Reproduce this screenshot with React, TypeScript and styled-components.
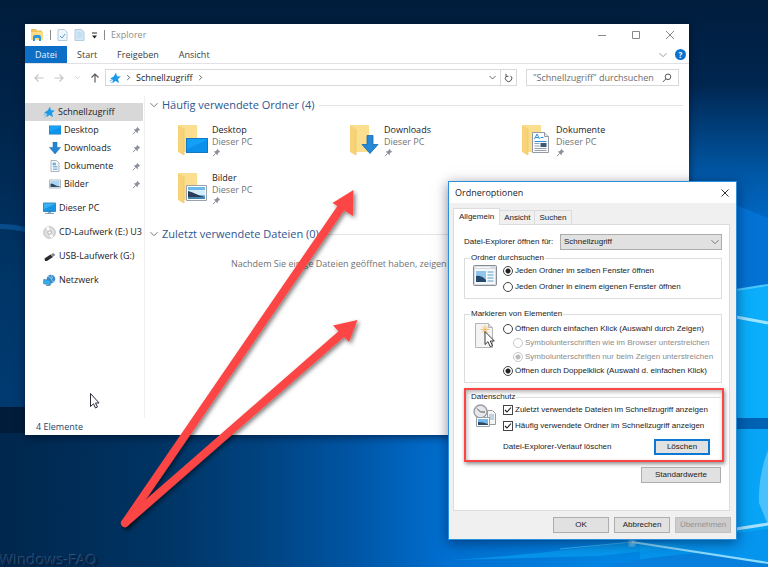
import React from "react";
import styled, { createGlobalStyle, css } from "styled-components";

const ui = '"Open Sans", "Noto Sans", sans-serif';
const dialogFont = '"Liberation Sans", Arial, sans-serif';

const GlobalStyle = createGlobalStyle`
  * { box-sizing: border-box; }
  html, body { margin: 0; height: 100%; }
  body { overflow: hidden; font-family: ${ui}; font-size: 9px; line-height: 12px; color: #1b1b1f; }
  button, input, select { font: inherit; color: inherit; margin: 0; }
  button { cursor: default; }
  svg { display: block; flex: none; }
`;

/* ---------- desktop ---------- */

const Desktop = styled.main`
  position: relative;
  min-height: 100vh;
  overflow: hidden;
  background: #002a55;
`;
const Backdrop = styled.svg`
  position: absolute;
  inset: 0;
  width: 100%;
  height: 100%;
`;
const Overlay = styled.svg`
  position: absolute;
  left: 0;
  top: 0;
  overflow: visible;
  pointer-events: none;
`;
const Watermark = styled.div`
  position: absolute;
  left: 0;
  bottom: 0;
  font-size: 15px;
  line-height: 16px;
  color: #0a2a50;
  text-shadow: -1px -1px 0 #2b527c, 1px 1px 1px #001a38;
`;

/* ---------- explorer window ---------- */

const ExplorerWindow = styled.section`
  position: absolute;
  left: 25px;
  right: 79px;
  top: 24px;
  background: #fff;
  box-shadow: 0 2px 8px rgba(0, 10, 30, 0.6);
`;
const TitleBar = styled.header`
  display: flex;
  align-items: center;
  gap: 6px;
  height: 22px;
  padding: 0 14px 0 5px;
`;
const TitleText = styled.span`
  flex: 1;
  color: #8d8d8d;
`;
const Rule = styled.span`
  width: 1px;
  height: 10px;
  background: #8a8a8a;
`;
const IconButton = styled.button`
  display: flex;
  align-items: center;
  justify-content: center;
  padding: 0;
  border: 0;
  background: none;
`;
const WindowControls = styled.div`
  display: flex;
  gap: 24px;
`;
const Ribbon = styled.nav`
  display: flex;
  align-items: center;
  height: 18px;
  padding-right: 3px;
  border-bottom: 1px solid #e2e2e6;
`;
const RibbonTab = styled.button<{ $primary?: boolean }>`
  height: 17px;
  padding: 0 10px;
  border: 0;
  background: ${(p) => (p.$primary ? "#0b6fc8" : "none")};
  color: ${(p) => (p.$primary ? "#e4f2ff" : "#3d3d42")};
`;
const Spacer = styled.span`
  flex: 1;
`;
const HelpButton = styled.button`
  width: 11px;
  height: 11px;
  margin-left: 8px;
  padding: 0;
  border: 0;
  border-radius: 50%;
  background: #0b72cf;
  color: #fff;
  font-weight: 700;
  font-size: 8px;
  line-height: 11px;
`;
const AddressRow = styled.div`
  display: flex;
  align-items: center;
  height: 27px;
  padding: 0 10px 0 9px;
`;
const NavButtons = styled.div`
  display: flex;
  align-items: center;
  justify-content: space-between;
  width: 66px;
  margin-right: 5px;
`;
const AddressBox = styled.div`
  flex: 1;
  display: flex;
  align-items: center;
  gap: 4px;
  height: 17px;
  padding-left: 3px;
  border: 1px solid #d9d9d9;
`;
const RefreshButton = styled(IconButton)`
  width: 16px;
  height: 15px;
  border-left: 1px solid #d9d9d9;
`;
const SearchBox = styled.label`
  display: flex;
  align-items: center;
  width: 153px;
  height: 17px;
  margin-left: 9px;
  padding: 0 6px;
  border: 1px solid #d9d9d9;
`;
const SearchInput = styled.input`
  flex: 1;
  min-width: 0;
  padding: 0;
  border: 0;
  outline: 0;
  background: none;
  &::placeholder {
    color: #6d6d6d;
    opacity: 1;
  }
`;
const Body = styled.div`
  display: flex;
  min-height: 327px;
  padding-top: 5px;
`;
const Sidebar = styled.aside`
  display: flex;
  flex-direction: column;
  width: 120px;
  padding: 7px 1px 0 0;
  border-right: 1px solid #efefef;
`;
const SideItem = styled.a<{ $level: 0 | 1 | 2; $active?: boolean }>`
  display: flex;
  align-items: center;
  gap: 3px;
  height: 18px;
  padding-right: ${(p) => (p.$level === 1 ? 2 : 0)}px;
  padding-left: ${(p) => (p.$level === 1 ? 24 : 18)}px;
  margin-top: ${(p) => (p.$level === 2 ? 6 : 0)}px;
  background: ${(p) => (p.$active ? "#d8d8d8" : "none")};
  color: inherit;
  text-decoration: none;
  white-space: nowrap;
`;
const SideLabel = styled.span`
  flex: 1;
  min-width: 0;
  overflow: hidden;
`;
const Content = styled.div`
  flex: 1;
  min-width: 0;
  padding: 1px 6px 0 5px;
`;
const GroupHeading = styled.h2`
  display: flex;
  align-items: center;
  gap: 4px;
  height: 16px;
  margin: 0;
  font-size: 11px;
  line-height: 16px;
  font-weight: 400;
  color: #2f568f;
  white-space: nowrap;
  &::after {
    content: "";
    flex: 1;
    height: 1px;
    background: #e3e5ea;
  }
`;
const FolderGrid = styled.div`
  display: grid;
  grid-template-columns: repeat(3, 172px);
  gap: 12px 0;
  padding: 11px 0 18px 28px;
`;
const Folder = styled.a`
  display: flex;
  gap: 4px;
  height: 36px;
  color: inherit;
  text-decoration: none;
`;
const FolderText = styled.div`
  display: flex;
  flex-direction: column;
`;
const FolderPlace = styled.span`
  color: #747474;
`;
const EmptyNote = styled.p`
  margin: 16px 0 0 81px;
  color: #727272;
  white-space: nowrap;
`;
const StatusBar = styled.footer`
  display: flex;
  align-items: center;
  height: 17px;
  padding-left: 11px;
  color: #2a3f66;
`;

/* ---------- options dialog ---------- */

const Dialog = styled.section`
  position: absolute;
  left: 448px;
  top: 181px;
  width: 289px;
  padding-bottom: 6px;
  border: 1px solid #2a8fdc;
  background: #f0f0f0;
  box-shadow: 0 3px 12px rgba(0, 10, 40, 0.5);
  font-family: ${dialogFont};
  font-size: 8px;
`;
const DialogTitle = styled.header`
  display: flex;
  align-items: center;
  justify-content: space-between;
  height: 21px;
  padding: 0 7px 0 6px;
  background: #fff;
  font-family: ${ui};
  font-size: 9px;
`;
const TabList = styled.div`
  display: flex;
  align-items: flex-end;
  height: 21px;
  padding-left: 4px;
`;
const Tab = styled.button<{ $selected?: boolean }>`
  position: relative;
  height: ${(p) => (p.$selected ? 17 : 14)}px;
  padding: 0 ${(p) => (p.$selected ? 5 : 4)}px;
  border: 1px solid #dcdcdc;
  border-left-width: ${(p) => (p.$selected ? 1 : 0)}px;
  border-bottom: 0;
  background: ${(p) => (p.$selected ? "#fff" : "#f0f0f0")};
  ${(p) => p.$selected && css`margin-bottom: -1px; z-index: 1;`}
`;
const TabPanel = styled.div`
  display: flex;
  flex-direction: column;
  min-height: 287px;
  margin: 0 6px 0 4px;
  padding: 9px 5px 0 10px;
  border: 1px solid #dcdcdc;
  background: #fff;
`;
const OpenForRow = styled.div`
  display: flex;
  align-items: center;
  justify-content: space-between;
  padding-right: 2px;
  white-space: nowrap;
`;
const SelectWrap = styled.div`
  display: grid;
  align-items: center;
  width: 162px;
  & > * { grid-area: 1 / 1; }
  & > svg { justify-self: end; margin-right: 3px; pointer-events: none; }
`;
const Select = styled.select`
  appearance: none;
  height: 16px;
  padding: 0 3px;
  border: 1px solid #adadad;
  border-radius: 0;
  background: #e1e1e1;
`;
const Group = styled.fieldset<{ $gap: number; $top?: number; $framed?: boolean }>`
  display: flex;
  gap: 6px;
  min-width: 0;
  margin: ${(p) => p.$gap}px 2px 0 0;
  padding: ${(p) => p.$top ?? 1}px 4px 5px 8px;
  border: 1px solid #dcdcdc;
  ${(p) => p.$framed && css`
    border-color: #dcdcdc transparent transparent transparent;
    margin: 0;
    padding: 1px 4px 4px 6px;
  `}
`;
const Legend = styled.legend`
  margin-left: -3px;
  padding: 0 1px;
  line-height: 12px;
`;
const Highlight = styled.div`
  margin: 5px 0 0 0;
  padding: 1px 0 0;
  border: 2px solid #fb4646;
  box-shadow: 1px 2px 4px rgba(0, 0, 0, 0.45), inset 1px 2px 4px rgba(0, 0, 0, 0.3);
`;
const Options = styled.div<{ $gap: number }>`
  flex: 1;
  display: flex;
  flex-direction: column;
  gap: ${(p) => p.$gap}px;
`;
const Option = styled.label<{ $sub?: boolean; $off?: boolean }>`
  display: flex;
  align-items: center;
  gap: 2px;
  height: 12px;
  margin-left: ${(p) => (p.$sub ? 10 : 0)}px;
  color: ${(p) => (p.$off ? "#8c8c8c" : "inherit")};
  white-space: nowrap;
`;
const Radio = styled.input`
  appearance: none;
  flex: none;
  width: 10px;
  height: 10px;
  border: 1px solid #444;
  border-radius: 50%;
  background: #fff;
  &:checked { background: radial-gradient(circle, #222 0 2px, #fff 3px); }
  &:disabled { border-color: #c8c8c8; }
  &:disabled:checked { background: radial-gradient(circle, #bbb 0 2px, #fff 3px); }
`;
const CheckFrame = styled.span`
  display: grid;
  & > * { grid-area: 1 / 1; }
  & > svg { pointer-events: none; opacity: 0; }
  & > input:checked + svg { opacity: 1; }
`;
const Checkbox = styled.input`
  appearance: none;
  width: 10px;
  height: 10px;
  border: 1px solid #444;
  background: #fff;
`;
const ClearRow = styled.div`
  display: flex;
  align-items: center;
  justify-content: space-between;
  margin-top: 3px;
  padding-right: 7px;
`;
const PushButton = styled.button<{ $focus?: boolean; $wide?: boolean }>`
  width: ${(p) => (p.$wide ? 80 : 56)}px;
  height: 16px;
  padding: 0;
  border: ${(p) => (p.$focus ? "2px solid #0a78d4" : "1px solid #adadad")};
  background: #e1e1e1;
  &:disabled {
    background: #cccccc;
    border-color: #c0c0c0;
    color: #939393;
  }
`;
const DefaultsRow = styled.div`
  display: flex;
  justify-content: flex-end;
  margin: 5px 3px 0 0;
`;
const DialogActions = styled.footer`
  display: flex;
  justify-content: flex-end;
  gap: 5px;
  padding: 6px 5px 0 0;
`;

/* ---------- drawings ---------- */

const Chevron = ({ dir = "down", size = 8, color = "#555" }: { dir?: "down" | "right"; size?: number; color?: string }) => (
  <svg width={size} height={size} viewBox="0 0 8 8" fill="none" stroke={color} strokeWidth="1">
    <path d={dir === "down" ? "M0.5 2.2 4 5.7 7.5 2.2" : "M2.6 1.2 5.4 4 2.6 6.8"} />
  </svg>
);
const NavArrow = ({ dir, color }: { dir: "left" | "right" | "up"; color: string }) => (
  <svg width="10" height="10" viewBox="0 0 10 10" fill="none" stroke={color} strokeWidth="1.2">
    <path d={{ left: "M9.5 5H1M4.5 1.5 1 5l3.5 3.5", right: "M.5 5H9M5.5 1.5 9 5 5.5 8.5", up: "M5 9.5V1M1.5 4.5 5 1l3.5 3.5" }[dir]} />
  </svg>
);
const StarIcon = () => (
  <svg width="12" height="12" viewBox="0 0 12 12">
    <path d="M7 .8 8 4.200 11.800 4.500 9 7l1 4L6.500 9 3.400 11.200 4 8.200 1.200 6.400 4.600 4.600Z" fill="#1c9be9" />
    <path d="M.5 9 4 7.500M1.500 11 4.500 9" stroke="#5ab8f0" strokeWidth=".8" />
  </svg>
);
const ExplorerIcon = () => (
  <svg width="14" height="12" viewBox="0 0 14 12">
    <path d="M1 0h5l1 1.500h5v9H1Z" fill="#f0c35a" />
    <path d="M1 3h12v8H1Z" fill="#fbdc85" />
    <path d="M3 12V8q0-2 2-2h4q2 0 2 2v4H9V9H5v3Z" fill="#2f97dd" />
  </svg>
);
const PageIcon = ({ check }: { check?: boolean }) => (
  <svg width="11" height="12" viewBox="0 0 11 12">
    <path d="M1 .5h6.500l2.500 2.500v8.500H1Z" fill={check ? "#eef6fc" : "#d3e8f6"} stroke="#b4cddd" />
    {check ? <path d="m3 7 2 2 3-4" fill="none" stroke="#58a0d0" /> : <path d="M3 4h5M3 6h5M3 8h5" stroke="#b4d6ec" />}
  </svg>
);
const MenuIcon = () => (
  <svg width="7" height="7" viewBox="0 0 7 7"><path d="M1 1h5" stroke="#222" /><path d="M1 3.500h5L3.500 6.500Z" fill="#222" /></svg>
);
const PinIcon = () => (
  <svg width="9" height="9" viewBox="0 0 9 9">
    <path d="M5 .8 8.300 4 7 4.200 5.800 5.600 5.600 7.400 1.700 3.600 3.500 3.300 4.900 2Z" fill="#8b919c" />
    <path d="M3.500 5.500 1 8.200" stroke="#8b919c" />
  </svg>
);
const Monitor = () => (
  <svg width="12" height="12" viewBox="0 0 12 12"><path d="M0 1.500h12v9H0Z" fill="#1479c4" /><path d="M.5 2h11v7.500H.5Z" fill="#18a2f5" /><path d="M.5 8 11.500 3v6.500H.5Z" fill="#0d93ea" /></svg>
);
const DownIcon = () => (
  <svg width="12" height="12" viewBox="0 0 12 12"><path d="M4 0h4v5.500h3.500L6 12 .5 5.500H4Z" fill="#2385d6" stroke="#1768b0" strokeWidth=".5" /></svg>
);
const DocIcon = () => (
  <svg width="12" height="12" viewBox="0 0 12 12"><path d="M2 .5h5.500L10 3v8.500H2Z" fill="#f5f8fb" stroke="#9aa4ae" strokeWidth=".8" /><path d="M4 3h2.500v2H4ZM4 6.500h4.500M4 8h4.500M4 9.500h4.500" stroke="#55a0d8" fill="#8cc8f0" strokeWidth=".7" /></svg>
);
const PictureIcon = () => (
  <svg width="12" height="12" viewBox="0 0 12 12"><path d="M.5 2h11v8H.5Z" fill="#fff" stroke="#9aa4ae" strokeWidth=".8" /><path d="M1.500 3h9v6h-9Z" fill="#a9d4f2" /><path d="M1.500 5.500q3 0 4.500 1.500t4.500 1v1h-9Z" fill="#2a4a66" /></svg>
);
const PcIcon = () => (
  <svg width="13" height="13" viewBox="0 0 13 13"><path d="M.5 1h12v8.500H.5Z" fill="#38b2f5" stroke="#3f86b8" /><path d="M1 7 12 2v7H1Z" fill="#1795e4" /><path d="M5 10h3v1H5ZM2 11h9v1H2Z" fill="#7fa6c0" /></svg>
);
const DiscIcon = () => (
  <svg width="13" height="13" viewBox="0 0 13 13"><circle cx="6.500" cy="6.500" r="5.800" fill="#dedede" stroke="#a6a6a6" strokeWidth=".7" /><path d="M6.500 6.500 3 2a5.500 5.500 0 0 1 3-1.200ZM6.500 6.500l4 4a5.500 5.500 0 0 1-3 1.500Z" fill="#fff" /><circle cx="6.500" cy="6.500" r="1.700" fill="#fff" stroke="#a0a0a0" strokeWidth=".8" /></svg>
);
const UsbIcon = () => (
  <svg width="13" height="13" viewBox="0 0 13 13"><path d="m1.500 8.500 6-4 2.500 2.500-6 4H2Z" fill="#2a2a30" /><path d="m8 4.500 2.500-1.500L12.300 5 10 6.800Z" fill="#85858d" /></svg>
);
const NetworkIcon = () => (
  <svg width="13" height="13" viewBox="0 0 13 13"><circle cx="8" cy="5" r="4.300" fill="#3c8dcc" /><path d="M5 2.500q3 0 3.500 3T12 7M8 .8q2 2 1 4" stroke="#a4d5f5" fill="none" strokeWidth=".8" /><path d="m.7 5.500 7 .8v4.500l-7-1Z" fill="#33aef2" stroke="#3a78a4" strokeWidth=".7" /><path d="M3 11.500h4" stroke="#7193aa" /></svg>
);

type FolderKind = "desktop" | "downloads" | "documents" | "pictures";
const FolderIcon = ({ kind }: { kind: FolderKind }) => (
  <svg width="30" height="32" viewBox="0 0 30 32">
    <path d="M0 1h19v27H6L0 27Z" fill="#fbdf8e" />
    <path d="M18 13h1v15h-1Z" fill="#f0cb6e" />
    <path d="M0 1 6 5v26.500L0 28Z" fill="#f7d277" />
    <path d="M6 5v26" stroke="#eec566" strokeWidth=".8" />
    {kind === "desktop" && (<><path d="M8 14h22v15H8Z" fill="#1577bf" /><path d="M9 15h20v13H9Z" fill="#12a0f8" /><path d="M9 25 29 16v12H9Z" fill="#0b91ec" /></>)}
    {kind === "downloads" && <path d="M17 11.500h6v9h5L20 29.500l-8-9h5Z" fill="#2588d8" stroke="#1868b0" strokeWidth=".8" />}
    {kind === "documents" && (<>
      <path d="M10.500 8.500h12l4 4v16h-16Z" fill="#fbfcfd" stroke="#949aa3" />
      <path d="M22.500 8.500v4h4" fill="#e3e7ec" stroke="#949aa3" />
      <path d="m12.500 15 2.500-5 2.500 5M13.500 13.500h3M18.500 13.500h3M12.500 17.500h12" stroke="#2d90d8" fill="none" />
      <path d="M18.500 19h6v4h-6Z" fill="#3d5874" /><path d="M12.500 19.500h5M12.500 22h5M12.500 24.500h12M12.500 26.500h12" stroke="#8b949e" strokeWidth=".9" />
    </>)}
    {kind === "pictures" && (<>
      <path d="M8.500 13.500h20v15h-20Z" fill="#fff" stroke="#9ba1a8" /><path d="M10 15h17v12H10Z" fill="#6db9ea" />
      <path d="M10 18h17v5H10Z" fill="#d6ecf8" /><path d="M10 19q4 1 8 3t9 3v1H10Z" fill="#2a3d58" /><path d="M10 25h17v2H10Z" fill="#4582ac" />
    </>)}
  </svg>
);
const WindowPreview = () => (
  <svg width="24" height="22" viewBox="0 0 24 22">
    <rect x=".5" y=".5" width="23" height="20" rx="1" fill="#d4dae0" stroke="#858c94" />
    <path d="M2 4h20v15H2Z" fill="#f5f9fc" /><path d="M3 6h10v11H3Z" fill="#8fc5ea" /><path d="M3 11q5-1 10 4v2H3Z" fill="#26486a" />
    <path d="M14.500 7h6M14.500 10h6M14.500 13h6M14.500 16h6" stroke="#5a9ccc" />
    <path d="M2.500 2.300h15" stroke="#fff" />
  </svg>
);
const ClickPage = () => (
  <svg width="24" height="26" viewBox="0 0 24 26">
    <path d="M2.500.5h13l4 4v20h-17Z" fill="#f4f4f4" stroke="#b5b5b5" /><path d="M15.500.5v4h4" fill="#ddd" stroke="#b5b5b5" />
    <path d="M12 2v9M7.500 6.500h9M9 3.500l6 6M15 3.500l-6 6" stroke="#f2b25a" strokeWidth=".8" />
    <path d="M12 8.500v13l3-2.800 2.200 5 2.300-1-2.200-4.700h4Z" fill="#fff" stroke="#222" strokeWidth=".9" />
  </svg>
);
const HistoryIcon = () => (
  <svg width="24" height="26" viewBox="0 0 24 26">
    <path d="M14.500 6.500h5l3 3v11h-8Z" fill="#f5f5f5" stroke="#9a9a9a" /><path d="M16 11h5M16 13h5M16 15h5" stroke="#6b9cc4" strokeWidth=".8" />
    <circle cx="7.500" cy="7.500" r="6.500" fill="#e6e7ea" stroke="#9a9da5" strokeWidth="1.400" /><path d="M4 4.500 7.500 8H12" stroke="#555" fill="none" />
    <path d="M3.500 13.500h13v9h-13Z" fill="#fff" stroke="#9aa0a8" /><path d="M5 15h10v6H5Z" fill="#77b9e8" /><path d="M5 18q5 0 10 2v1H5Z" fill="#284968" />
  </svg>
);

const Wallpaper = () => (
  <Backdrop viewBox="0 0 768 567" preserveAspectRatio="none" aria-hidden="true">
    <defs>
      <linearGradient id="base" x1="0" y1="0" x2="0" y2="1">
        <stop offset="0" stopColor="#001d3c" /><stop offset=".2" stopColor="#00244a" />
        <stop offset=".5" stopColor="#003668" /><stop offset=".7" stopColor="#003a70" /><stop offset="1" stopColor="#00284f" />
      </linearGradient>
      <linearGradient id="floor" x1="0" y1="0" x2="1" y2="0">
        <stop offset="0" stopColor="#00274d" /><stop offset=".2" stopColor="#003362" />
        <stop offset=".34" stopColor="#004380" /><stop offset=".46" stopColor="#0055a4" /><stop offset=".58" stopColor="#006fd0" /><stop offset=".8" stopColor="#0085e4" /><stop offset="1" stopColor="#0594ee" />
      </linearGradient>
      <linearGradient id="rightSky" x1="0" y1="0" x2="0" y2="1">
        <stop offset="0" stopColor="#001d3c" /><stop offset=".2" stopColor="#002650" /><stop offset=".42" stopColor="#0059a8" />
        <stop offset=".5" stopColor="#0064bd" /><stop offset=".68" stopColor="#0883e2" /><stop offset="1" stopColor="#0f9bf4" />
      </linearGradient>
      <filter id="soft"><feGaussianBlur stdDeviation="2" /></filter>
    </defs>
    <rect width="768" height="567" fill="url(#base)" />
    <rect y="433" width="768" height="134" fill="url(#floor)" />
    <rect x="640" width="128" height="420" fill="url(#rightSky)" />
    <path d="M0 224q14 0 25 3v5q-12-3-25-3Z" fill="#0c58a0" opacity=".7" />
    <path d="M0 407h60v26H0Z" fill="#001c3a" />
    <path d="M736 205l32 13v80l-32 20Z" fill="#0472d4" />
    <path d="M736 290 768 286V418H736Z" fill="#0aaefb" />
    <path d="M736 428h32v139h-32Z" fill="#08a4f6" />
    <path d="M736 418h32v11h-32Z" fill="#0062b4" />
    <path d="M736 290 768 285" stroke="#48c8ff" strokeWidth="2" />
    <path d="M736 317 768 323" stroke="#9ee4ff" strokeWidth="3" />
    <path d="M768 450q-10 26-9 53l9 22Z" fill="#66ccff" opacity=".7" />
    <path d="M640 545 768 529V567H640Z" fill="#0594ee" />
    <path d="M736 529 768 524" stroke="#a6e2ff" strokeWidth="3" />
    <path d="M450 560Q540 555 632 541L690 546 600 556Z" fill="#08a0f2" opacity=".7" />
    <path d="M600 567Q650 556 700 553L768 563V567Z" fill="#0680dc" />
    <path d="M632 542 768 563" stroke="#8cdcff" strokeWidth="2" />
    <path d="M560 549 632 542" stroke="#38b5fa" />
    <circle cx="632" cy="543" r="3" fill="#b8eaff" filter="url(#soft)" />
  </Backdrop>
);

const Annotations = () => (
  <Overlay width="768" height="567" viewBox="0 0 768 567" aria-hidden="true">
    <defs><filter id="drop" x="-10%" y="-10%" width="130%" height="130%"><feDropShadow dx="2" dy="2" stdDeviation="2" floodOpacity=".5" /></filter></defs>
    <g filter="url(#drop)" fill="#fc4545" stroke="#fc4545">
      <path d="M125 523 345 202" strokeWidth="8" strokeLinecap="round" />
      <path d="M353.500 190 332.500 203 353 216Z" stroke="none" />
    </g>
    <g filter="url(#drop)" fill="#fc4545" stroke="#fc4545">
      <path d="M125 523 346 330" strokeWidth="8" strokeLinecap="round" />
      <path d="M357.500 320 333 325.500 349 342Z" stroke="none" />
    </g>
    <path d="M90.500 393.500v13l3-2.700 2 4.200 2-1-2-4h3.600Z" fill="#fff" stroke="#2c2c3c" />
  </Overlay>
);

/* ---------- data ---------- */

const sideItems: { label: string; icon: React.ReactNode; level: 0 | 1 | 2; pinned?: boolean }[] = [
  { label: "Schnellzugriff", icon: <StarIcon />, level: 0 },
  { label: "Desktop", icon: <Monitor />, level: 1, pinned: true },
  { label: "Downloads", icon: <DownIcon />, level: 1, pinned: true },
  { label: "Dokumente", icon: <DocIcon />, level: 1, pinned: true },
  { label: "Bilder", icon: <PictureIcon />, level: 1, pinned: true },
  { label: "Dieser PC", icon: <PcIcon />, level: 2 },
  { label: "CD-Laufwerk (E:) U3 S", icon: <DiscIcon />, level: 2 },
  { label: "USB-Laufwerk (G:)", icon: <UsbIcon />, level: 2 },
  { label: "Netzwerk", icon: <NetworkIcon />, level: 2 },
];
const folders: { label: string; kind: FolderKind }[] = [
  { label: "Desktop", kind: "desktop" },
  { label: "Downloads", kind: "downloads" },
  { label: "Dokumente", kind: "documents" },
  { label: "Bilder", kind: "pictures" },
];

const CheckOption = ({ label }: { label: string }) => (
  <Option>
    <CheckFrame>
      <Checkbox type="checkbox" defaultChecked />
      <svg width="10" height="10" viewBox="0 0 10 10"><path d="m2 5 2 2 4-4.500" fill="none" stroke="#222" strokeWidth="1.100" /></svg>
    </CheckFrame>
    {label}
  </Option>
);

const Explorer = () => (
  <ExplorerWindow>
    <TitleBar>
      <ExplorerIcon /><Rule />
      <IconButton aria-label="Eigenschaften"><PageIcon check /></IconButton>
      <IconButton aria-label="Neuer Ordner"><PageIcon /></IconButton>
      <IconButton aria-label="Anpassen"><MenuIcon /></IconButton>
      <Rule />
      <TitleText>Explorer</TitleText>
      <WindowControls>
        <IconButton aria-label="Minimieren"><svg width="10" height="10"><path d="M1 5.500h8" stroke="#888" /></svg></IconButton>
        <IconButton aria-label="Maximieren"><svg width="10" height="10"><path d="M1.500 1.500h7v7h-7Z" fill="none" stroke="#888" /></svg></IconButton>
        <IconButton aria-label="Schließen"><svg width="10" height="10"><path d="m1 1 8 8M9 1 1 9" stroke="#888" /></svg></IconButton>
      </WindowControls>
    </TitleBar>
    <Ribbon>
      <RibbonTab $primary>Datei</RibbonTab>
      <RibbonTab>Start</RibbonTab>
      <RibbonTab>Freigeben</RibbonTab>
      <RibbonTab>Ansicht</RibbonTab>
      <Spacer />
      <IconButton aria-label="Menüband"><Chevron color="#9a9a9a" /></IconButton>
      <HelpButton aria-label="Hilfe">?</HelpButton>
    </Ribbon>
    <AddressRow>
      <NavButtons>
        <IconButton aria-label="Zurück"><NavArrow dir="left" color="#c4c4c4" /></IconButton>
        <IconButton aria-label="Vorwärts"><NavArrow dir="right" color="#c4c4c4" /></IconButton>
        <IconButton aria-label="Verlauf"><Chevron size={5} color="#b0b0b0" /></IconButton>
        <IconButton aria-label="Nach oben"><NavArrow dir="up" color="#5c5c5c" /></IconButton>
      </NavButtons>
      <AddressBox>
        <StarIcon /><Chevron dir="right" size={7} />
        <span>Schnellzugriff</span><Chevron dir="right" size={7} />
        <Spacer />
        <IconButton aria-label="Adressen"><Chevron size={7} /></IconButton>
        <RefreshButton aria-label="Aktualisieren">
          <svg width="9" height="10" viewBox="0 0 9 10" fill="none" stroke="#555"><path d="M6.500 2.800A3.200 3.200 0 1 1 2.500 3M2 .8v2.500h2.500" /></svg>
        </RefreshButton>
      </AddressBox>
      <SearchBox>
        <SearchInput aria-label="Suchen" placeholder={'"Schnellzugriff" durchsuchen'} />
        <svg width="10" height="10" viewBox="0 0 10 10" fill="none" stroke="#555"><circle cx="6" cy="3.800" r="2.800" /><path d="M4 5.800.8 9" /></svg>
      </SearchBox>
    </AddressRow>
    <Body>
      <Sidebar>
        {sideItems.map((item) => (
          <SideItem href="#" key={item.label} $level={item.level} $active={item.level === 0}>
            {item.icon}
            <SideLabel>{item.label}</SideLabel>
            {item.pinned && <PinIcon />}
          </SideItem>
        ))}
      </Sidebar>
      <Content>
        <GroupHeading><Chevron size={8} color="#777" />Häufig verwendete Ordner (4)</GroupHeading>
        <FolderGrid>
          {folders.map((f) => (
            <Folder href="#" key={f.label}>
              <FolderIcon kind={f.kind} />
              <FolderText>
                <span>{f.label}</span>
                <FolderPlace>Dieser PC</FolderPlace>
                <PinIcon />
              </FolderText>
            </Folder>
          ))}
        </FolderGrid>
        <GroupHeading><Chevron size={8} color="#777" />Zuletzt verwendete Dateien (0)</GroupHeading>
        <EmptyNote>Nachdem Sie einige Dateien geöffnet haben, zeigen wir</EmptyNote>
      </Content>
    </Body>
    <StatusBar>4 Elemente</StatusBar>
  </ExplorerWindow>
);

const FolderOptions = () => (
  <Dialog role="dialog" aria-label="Ordneroptionen">
    <DialogTitle>
      Ordneroptionen
      <IconButton aria-label="Dialog schließen"><svg width="8" height="8"><path d="m.5.5 7 7M7.500.5l-7 7" stroke="#333" /></svg></IconButton>
    </DialogTitle>
    <TabList role="tablist">
      <Tab role="tab" aria-selected="true" $selected>Allgemein</Tab>
      <Tab role="tab">Ansicht</Tab>
      <Tab role="tab">Suchen</Tab>
    </TabList>
    <TabPanel role="tabpanel">
      <OpenForRow>
        <label htmlFor="open-for">Datei-Explorer öffnen für:</label>
        <SelectWrap>
          <Select id="open-for"><option>Schnellzugriff</option></Select>
          <Chevron size={8} color="#777" />
        </SelectWrap>
      </OpenForRow>
      <Group $gap={2}>
        <Legend>Ordner durchsuchen</Legend>
        <WindowPreview />
        <Options $gap={4}>
          <Option><Radio type="radio" name="browse" defaultChecked />Jeden Ordner im selben Fenster öffnen</Option>
          <Option><Radio type="radio" name="browse" />Jeden Ordner in einem eigenen Fenster öffnen</Option>
        </Options>
      </Group>
      <Group $gap={9} $top={3}>
        <Legend>Markieren von Elementen</Legend>
        <ClickPage />
        <Options $gap={2}>
          <Option><Radio type="radio" name="click" />Öffnen durch einfachen Klick (Auswahl durch Zeigen)</Option>
          <Option $sub $off><Radio type="radio" name="underline" disabled />Symbolunterschriften wie im Browser unterstreichen</Option>
          <Option $sub $off><Radio type="radio" name="underline" disabled defaultChecked />Symbolunterschriften nur beim Zeigen unterstreichen</Option>
          <Option><Radio type="radio" name="click" defaultChecked />Öffnen durch Doppelklick (Auswahl d. einfachen Klick)</Option>
        </Options>
      </Group>
      <Highlight>
        <Group $gap={0} $framed>
          <Legend>Datenschutz</Legend>
          <HistoryIcon />
          <Options $gap={4}>
            <CheckOption label="Zuletzt verwendete Dateien im Schnellzugriff anzeigen" />
            <CheckOption label="Häufig verwendete Ordner im Schnellzugriff anzeigen" />
            <ClearRow>Datei-Explorer-Verlauf löschen<PushButton $focus>Löschen</PushButton></ClearRow>
          </Options>
        </Group>
      </Highlight>
      <DefaultsRow><PushButton $wide>Standardwerte</PushButton></DefaultsRow>
    </TabPanel>
    <DialogActions>
      <PushButton>OK</PushButton>
      <PushButton>Abbrechen</PushButton>
      <PushButton disabled>Übernehmen</PushButton>
    </DialogActions>
  </Dialog>
);

export default function App() {
  return (
    <>
      <GlobalStyle />
      <Desktop>
        <Wallpaper />
        <Watermark>Windows-FAQ</Watermark>
        <Explorer />
        <FolderOptions />
        <Annotations />
      </Desktop>
    </>
  );
}
